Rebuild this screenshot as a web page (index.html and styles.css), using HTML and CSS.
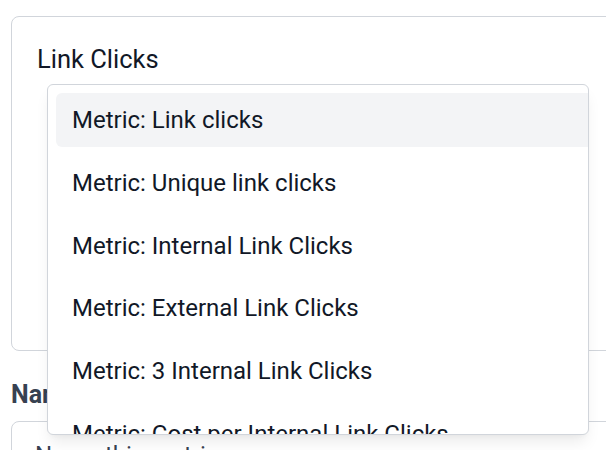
FILE: index.html
```html
<!DOCTYPE html>
<html lang="en">
<head>
<meta charset="utf-8">
<title>Metric picker</title>
<link rel="stylesheet" href="styles.css">
</head>
<body>
<div class="page">
  <section class="card">
    <h2 class="card-title">Link Clicks</h2>
  </section>
  <label class="field-label">Name</label>
  <div class="input">Name this metric</div>

  <div class="dropdown">
    <ul class="options">
      <li class="option active">Metric: Link clicks</li>
      <li class="option">Metric: Unique link clicks</li>
      <li class="option">Metric: Internal Link Clicks</li>
      <li class="option">Metric: External Link Clicks</li>
      <li class="option">Metric: 3 Internal Link Clicks</li>
      <li class="option">Metric: Cost per Internal Link Clicks</li>
      <li class="option">Metric: Cost per External Link Clicks</li>
    </ul>
  </div>
</div>
</body>
</html>
```

FILE: styles.css
```css
html, body {
  margin: 0;
  padding: 0;
  overflow: hidden;
  background: #ffffff;
}

body {
  font-family: Roboto, "Liberation Sans", sans-serif;
  color: #111827;
}

.page {
  position: relative;
  width: 640px;
  height: 450px;
  padding: 16px 0 0 11px;
  box-sizing: border-box;
  overflow: hidden;
}

.card {
  height: 335px;
  border: 1px solid #d1d5db;
  border-radius: 8px;
  box-sizing: border-box;
  padding: 28px 25px;
}

.card-title {
  margin: 0;
  font-size: 25.5px;
  font-weight: 400;
  line-height: 28px;
  color: #111827;
}

.field-label {
  display: block;
  margin-top: 30px;
  font-size: 25px;
  font-weight: 700;
  line-height: 28px;
  color: #374151;
}

.input {
  margin-top: 12px;
  height: 48px;
  border: 1px solid #d1d5db;
  border-radius: 8px;
  padding: 19px 23px;
  font-size: 24px;
  color: #374151;
}

.dropdown {
  position: absolute;
  left: 47px;
  top: 84px;
  width: 542px;
  height: 351px;
  box-sizing: border-box;
  background: #ffffff;
  border: 1px solid #d1d5db;
  border-radius: 6px;
  box-shadow: 0 10px 15px -3px rgba(0,0,0,0.08), 0 4px 6px -4px rgba(0,0,0,0.06);
  padding: 8px 0 8px 8px;
  overflow: hidden;
}

.options {
  list-style: none;
  margin: 0;
  padding: 0;
  width: 580px;
  display: flex;
  flex-direction: column;
  gap: 8.75px;
}

.option {
  height: 54px;
  flex: none;
  display: flex;
  align-items: center;
  padding: 0 16px;
  border-radius: 6px;
  font-size: 24px;
  color: #111827;
  white-space: nowrap;
}

.option.active {
  background: #f3f4f6;
}
```
